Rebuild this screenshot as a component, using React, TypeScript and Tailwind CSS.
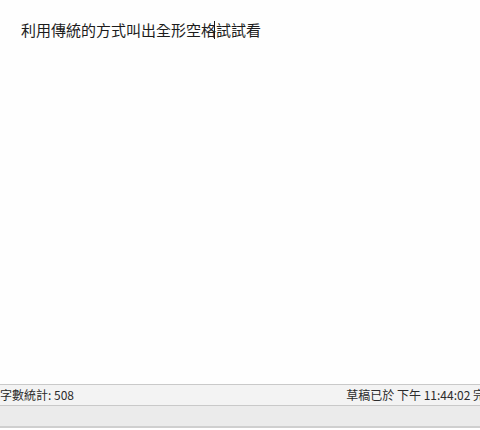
import React from 'react';

const font = { fontFamily: '"Noto Sans CJK TC", "Noto Sans", sans-serif' };

export default function App() {
  return (
    <div className="flex h-[430px] w-[480px] flex-col overflow-hidden bg-[#fefefe]" style={font}>
      {/* editor area */}
      <div className="flex-1 px-[21px] pt-[19px]">
        <p className="text-[15px] leading-[22px] text-[#1c1c1c] whitespace-nowrap">
          利用傳統的方式叫出全形空格
          <span className="relative inline-block h-[18px] w-0 align-[-3px]">
            <span className="absolute left-[-2px] top-0 h-[18px] w-px bg-[#1c1c1c]" />
          </span>
          試試看
        </p>
      </div>

      {/* status bar */}
      <div className="flex h-[22px] items-center justify-between overflow-hidden border-y border-[#c9c9c9] bg-[#f3f3f3] text-[12px] text-[#2b2b2b] whitespace-nowrap">
        <span>字數統計: 508</span>
        <span className="mr-[-17px]">草稿已於 下午 11:44:02 完成</span>
      </div>

      <div className="h-[20px] bg-[#ebebeb]" />
      <div className="h-[2px] bg-[#cfcfcf]" />
      <div className="h-[2px] bg-white" />
    </div>
  );
}
